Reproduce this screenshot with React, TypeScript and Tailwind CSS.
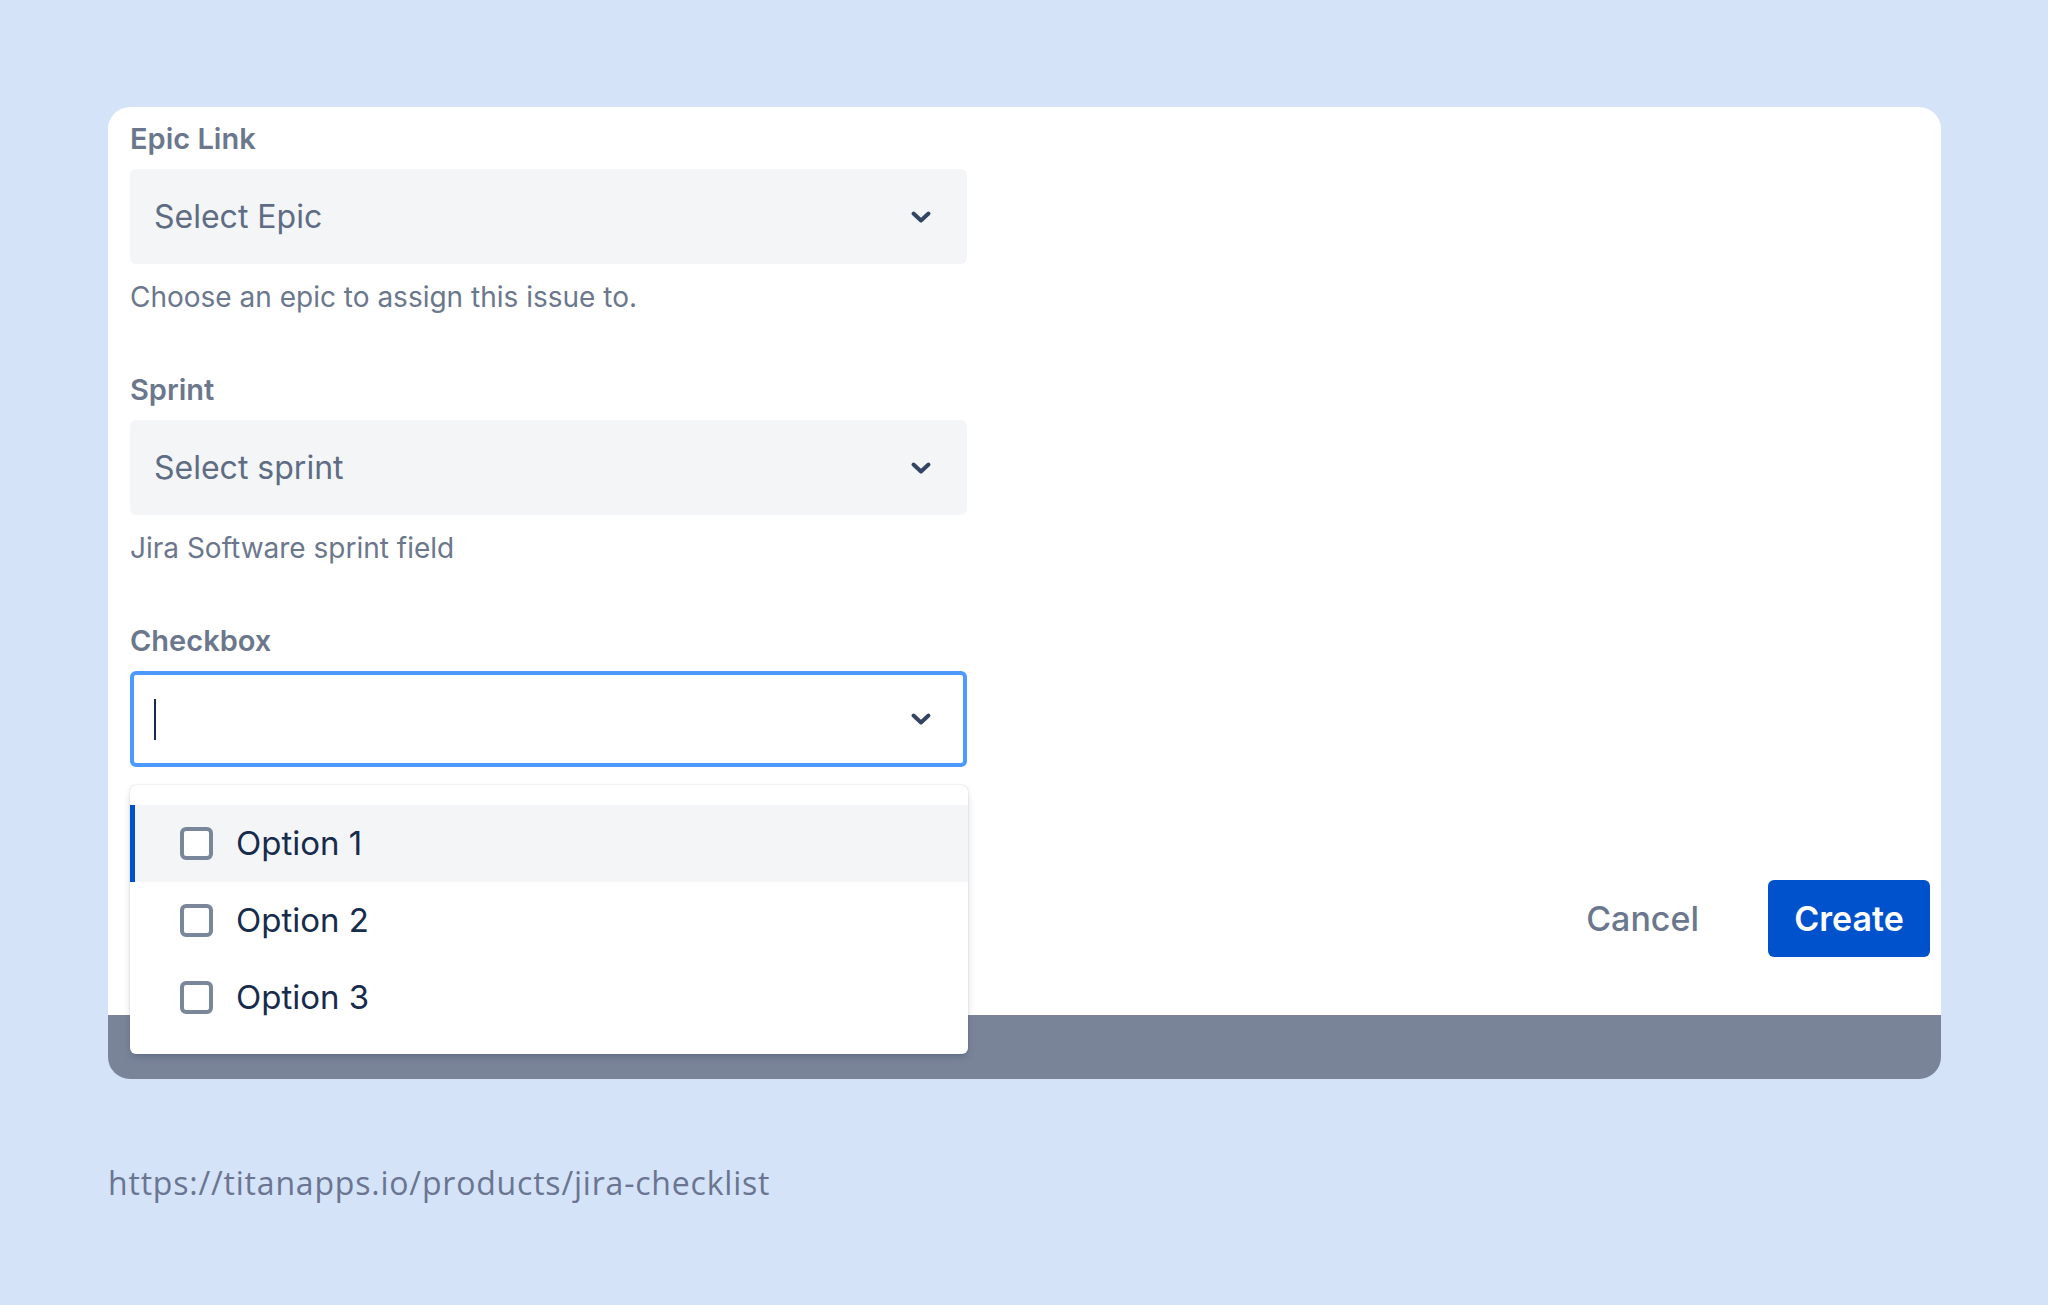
import React from "react";

const options = ["Option 1", "Option 2", "Option 3"];

function Chevron() {
  return (
    <svg width="22" height="14" viewBox="0 0 22 14" fill="none" className="shrink-0">
      <path
        d="M3.5 3.5 L11 10.5 L18.5 3.5"
        stroke="#344563"
        strokeWidth="4"
        strokeLinecap="round"
        strokeLinejoin="round"
      />
    </svg>
  );
}

function SelectField({
  label,
  placeholder,
  help,
}: {
  label: string;
  placeholder: string;
  help: string;
}) {
  return (
    <div className="flex flex-col w-[837px]">
      <label className="text-[29px] leading-[32px] font-semibold text-[#6b778c]">{label}</label>
      <div className="mt-[14px] h-[95px] rounded-[6px] bg-[#f4f5f7] flex items-center justify-between pl-[24px] pr-[35px]">
        <span className="text-[32px] text-[#5e6c84]">{placeholder}</span>
        <Chevron />
      </div>
      <p className="mt-[16px] text-[28px] leading-[34px] text-[#6b778c]">{help}</p>
    </div>
  );
}

export default function App() {
  return (
    <div
      className="w-full min-h-[1305px] bg-[#d4e3f8] pt-[107px] pl-[108px]"
      style={{ fontFamily: "Inter, 'Noto Sans', sans-serif" }}
    >
      <div className="w-[1833px] h-[972px] rounded-[22px] flex flex-col overflow-hidden">
        <div className="flex-1 bg-white flex flex-col pt-[16px] pl-[22px]">
          <SelectField
            label="Epic Link"
            placeholder="Select Epic"
            help="Choose an epic to assign this issue to."
          />
          <div className="mt-[60px]">
            <SelectField label="Sprint" placeholder="Select sprint" help="Jira Software sprint field" />
          </div>

          {/* Checkbox field, open */}
          <div className="mt-[60px] w-[837px] flex flex-col relative">
            <label className="text-[29px] leading-[32px] font-semibold text-[#6b778c]">Checkbox</label>
            <div className="mt-[14px] h-[96px] rounded-[6px] border-[4px] border-[#4c9aff] bg-white flex items-center justify-between pl-[20px] pr-[31px]">
              <span className="block w-[2px] h-[41px] bg-[#172b4d]" />
              <Chevron />
            </div>

            <div className="absolute left-0 top-[160px] w-[838px] z-10 bg-white rounded-[6px] pt-[20px] pb-[18px] shadow-[0_4px_8px_-2px_rgba(9,30,66,0.25),0_0_1px_rgba(9,30,66,0.31)]">
              {options.map((o, i) => (
                <div
                  key={o}
                  className={
                    i === 0
                      ? "h-[77px] flex items-center bg-[#f4f5f7] border-l-[5px] border-[#0052cc] pl-[45px]"
                      : "h-[77px] flex items-center pl-[50px]"
                  }
                >
                  <span className="w-[33px] h-[33px] rounded-[6px] border-[4px] border-[#7a869a] bg-white" />
                  <span className="ml-[23px] text-[33px] text-[#172b4d]">{o}</span>
                </div>
              ))}
            </div>
          </div>

          <div className="mt-auto flex justify-end items-center pr-[11px] pb-[58px]">
            <button className="h-[77px] px-[20px] text-[34px] font-medium text-[#6b778c]">Cancel</button>
            <button className="ml-[49px] h-[77px] w-[162px] rounded-[6px] bg-[#0052cc] text-[34px] font-semibold text-white">
              Create
            </button>
          </div>
        </div>
        <div className="h-[64px] bg-[#7a8499]" />
      </div>

      <p
        className="mt-[84px] text-[32px] leading-[40px] tracking-[0.8px] text-[#6b7592]"
        style={{ fontFamily: "'Open Sans', sans-serif" }}
      >
        https://titanapps.io/products/jira-checklist
      </p>
    </div>
  );
}
